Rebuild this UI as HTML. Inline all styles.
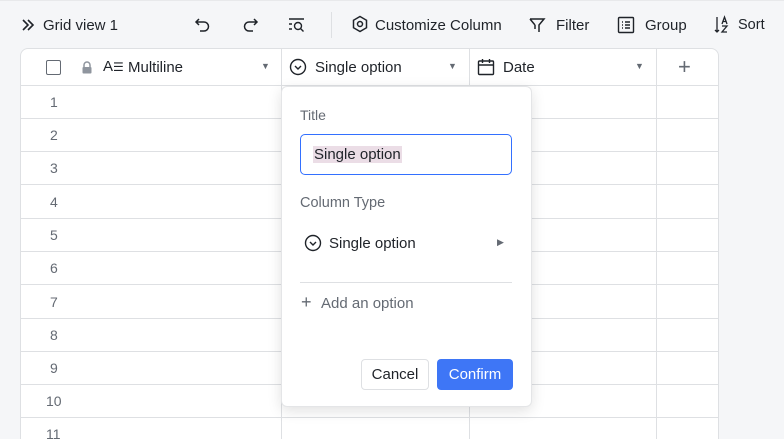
<!DOCTYPE html>
<html><head><style>
*{box-sizing:border-box;margin:0;padding:0}
html,body{width:784px;height:439px;overflow:hidden}
body{background:#f5f6f8;font-family:"Liberation Sans",sans-serif;color:#1f2329;position:relative}
.t{position:absolute;font-size:15px;white-space:nowrap}
svg{position:absolute}
.tbl{position:absolute;left:20px;top:48px;width:699px;height:400px;background:#fff;border:1px solid #dee0e3;border-radius:8px 8px 0 0;overflow:hidden}
.hl{position:absolute;left:0;right:0;height:1px;background:#dee0e3}
.vl{position:absolute;top:0;bottom:0;width:1px;background:#dee0e3}
.num{position:absolute;left:29px;font-size:14px;color:#646a73}
.pop{position:absolute;left:281px;top:86px;width:251px;height:321px;background:#fff;border:1px solid #e4e5e7;border-radius:6px;box-shadow:0 4px 14px rgba(0,0,0,.12)}
</style></head><body>
<div style="position:absolute;left:0;top:0;width:784px;height:1px;background:#e8e9eb"></div>
<svg style="left:21px;top:18px" width="14" height="14" viewBox="0 0 14 14" fill="none" stroke="#1f2329" stroke-width="1.6"><path d="M2 2l5 5-5 5M7 2l5 5-5 5"/></svg>
<div class="t" style="left:43px;top:17px">Grid view 1</div>
<svg style="left:194px;top:16px" width="18" height="18" viewBox="0 0 18 18" fill="none" stroke="#1f2329" stroke-width="1.5"><path d="M5 3L2 6l3 3M2 6h8a4.5 4.5 0 010 9H6"/></svg>
<svg style="left:241px;top:16px" width="18" height="18" viewBox="0 0 18 18" fill="none" stroke="#1f2329" stroke-width="1.5"><path d="M13 3l3 3-3 3M16 6H8a4.5 4.5 0 000 9h4"/></svg>
<svg style="left:288px;top:17px" width="18" height="16" viewBox="0 0 18 16" fill="none" stroke="#1f2329" stroke-width="1.4"><path d="M1 2h15M1 7h3M1 12h3"/><circle cx="10" cy="9" r="3.5"/><path d="M12.5 11.5l3 3"/></svg>
<div style="position:absolute;left:331px;top:12px;width:1px;height:26px;background:#dee0e3"></div>
<svg style="left:351px;top:15px" width="18" height="18" viewBox="0 0 18 18" fill="none" stroke="#1f2329" stroke-width="1.5"><path d="M9 1.5l6.5 3.75v7.5L9 16.5 2.5 12.75v-7.5z"/><circle cx="9" cy="9" r="2.5"/></svg>
<div class="t" style="left:375px;top:17px">Customize Column</div>
<svg style="left:528px;top:16px" width="18" height="18" viewBox="0 0 18 18" fill="none" stroke="#1f2329" stroke-width="1.5"><path d="M2 3h14l-5 6v7M7 9v4M2 3l5 6"/></svg>
<div class="t" style="left:556px;top:17px">Filter</div>
<svg style="left:617px;top:16px" width="18" height="18" viewBox="0 0 18 18" fill="none" stroke="#1f2329" stroke-width="1.4"><rect x="1.5" y="1.5" width="15" height="15" rx="1"/><path d="M5 6h1M8 6h5M5 9h1M8 9h5M5 12h1M8 12h5"/></svg>
<div class="t" style="left:645px;top:17px">Group</div>
<svg style="left:714px;top:15px" width="18" height="20" viewBox="0 0 18 20" fill="none" stroke="#1f2329" stroke-width="1.3"><path d="M3 2v15M1 15l2 2 2-2"/><path d="M8 9l2.5-7L13 9M9 6.5h3M8 11h5l-5 6h5"/></svg>
<div class="t" style="left:738px;top:17px;font-size:14.5px">Sort</div>

<div class="tbl">
<div class="hl" style="top:36px"></div>
<div class="vl" style="left:260px"></div><div class="vl" style="left:448px"></div><div class="vl" style="left:635px"></div>
<div class="hl" style="top:69px"></div><div class="hl" style="top:102px"></div><div class="hl" style="top:135px"></div><div class="hl" style="top:169px"></div><div class="hl" style="top:202px"></div><div class="hl" style="top:235px"></div><div class="hl" style="top:269px"></div><div class="hl" style="top:302px"></div><div class="hl" style="top:335px"></div><div class="hl" style="top:368px"></div>
<div style="position:absolute;left:25px;top:11px;width:15px;height:15px;border:1.5px solid #646a73;border-radius:2px"></div>
<svg style="left:60px;top:12px" width="12" height="13" viewBox="0 0 12 13"><path d="M3 6V4a3 3 0 016 0v2" fill="none" stroke="#8f959e" stroke-width="1.5"/><rect x="1.5" y="6" width="9" height="6.5" rx="1" fill="#8f959e"/></svg>
<div class="t" style="left:82px;top:9px;font-size:15px">A<span style="font-size:12px;letter-spacing:-1px">☰</span></div>
<div class="t" style="left:107px;top:10px">Multiline</div>
<div class="t" style="left:240px;top:12px;font-size:9px;color:#646a73">▼</div>
<svg style="left:268px;top:9px" width="18" height="18" viewBox="0 0 18 18" fill="none" stroke="#1f2329" stroke-width="1.4"><circle cx="9" cy="9" r="7.5"/><path d="M6 8l3 3 3-3"/></svg>
<div class="t" style="left:294px;top:10px">Single option</div>
<div class="t" style="left:427px;top:12px;font-size:9px;color:#646a73">▼</div>
<svg style="left:456px;top:9px" width="18" height="18" viewBox="0 0 18 18" fill="none" stroke="#1f2329" stroke-width="1.4"><rect x="1.5" y="3" width="15" height="13.5" rx="1"/><path d="M1.5 7h15M5.5 1v4M12.5 1v4"/></svg>
<div class="t" style="left:482px;top:10px">Date</div>
<div class="t" style="left:614px;top:12px;font-size:9px;color:#646a73">▼</div>
<div class="t" style="left:657px;top:5px;font-size:22px;font-weight:300;color:#646a73">+</div>
<div class="num" style="top:45px">1</div><div class="num" style="top:78px">2</div><div class="num" style="top:111px">3</div><div class="num" style="top:145px">4</div><div class="num" style="top:178px">5</div><div class="num" style="top:211px">6</div><div class="num" style="top:245px">7</div><div class="num" style="top:278px">8</div><div class="num" style="top:311px">9</div><div class="num" style="top:344px;left:25px">10</div><div class="num" style="top:377px;left:25px">11</div>
</div>

<div class="pop">
<div class="t" style="left:18px;top:20px;color:#646a73;font-size:14px">Title</div>
<div style="position:absolute;left:18px;top:47px;width:212px;height:41px;border:1px solid #3370ff;border-radius:5px"></div>
<div class="t" style="left:31px;top:59px;background:#ebdde6;padding:0 1px">Single option</div>
<div class="t" style="left:18px;top:108px;color:#646a73;font-size:14.5px">Column Type</div>
<svg style="left:22px;top:147px" width="18" height="18" viewBox="0 0 18 18" fill="none" stroke="#1f2329" stroke-width="1.4"><circle cx="9" cy="9" r="7.5"/><path d="M6 8l3 3 3-3"/></svg>
<div class="t" style="left:47px;top:148px;font-size:15px">Single option</div>
<div class="t" style="left:215px;top:150px;font-size:9px;color:#646a73">▶</div>
<div style="position:absolute;left:18px;top:195px;width:212px;height:1px;background:#dee0e3"></div>
<div class="t" style="left:19px;top:205px;font-size:18px;color:#646a73">+</div>
<div class="t" style="left:39px;top:208px;font-size:15px;color:#646a73">Add an option</div>
<div style="position:absolute;left:79px;top:272px;width:68px;height:31px;border:1px solid #dee0e3;border-radius:4px;font-size:15px;text-align:center;line-height:29px">Cancel</div>
<div style="position:absolute;left:155px;top:272px;width:76px;height:31px;background:#3e76f6;color:#fff;border-radius:4px;font-size:15px;text-align:center;line-height:31px">Confirm</div>
</div>
</body></html>
